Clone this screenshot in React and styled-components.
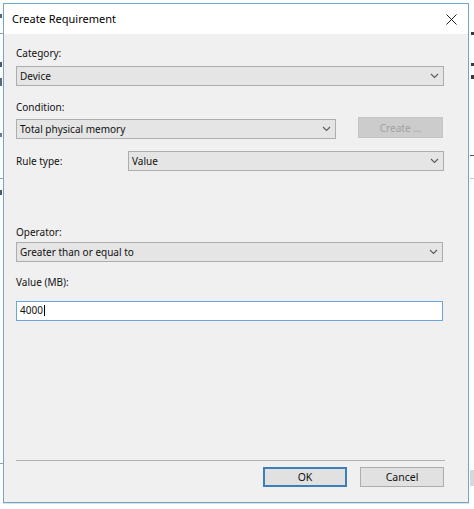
import React from "react";
import styled, { createGlobalStyle } from "styled-components";

const Global = createGlobalStyle`
  html, body { margin: 0; padding: 0; background: #ffffff; }
  body { font-family: "Noto Sans", "Liberation Sans", sans-serif; }
`;

const Desktop = styled.div`
  position: relative;
  width: 474px;
  height: 509px;
  overflow: hidden;
  background: #ffffff;
  padding: 3px 0 0 3px;
  box-sizing: border-box;
`;

const Mark = styled.div`
  position: absolute;
  background: ${(p) => p.$c || "#3a4a5a"};
`;

const Window = styled.div`
  position: relative;
  width: 466px;
  height: 500px;
  box-sizing: border-box;
  border: 1px solid #72a6c6;
  background: #f0f0f0;
  display: flex;
  flex-direction: column;
  box-shadow: 0 1px 0 #d6e3ec;
`;

const TitleBar = styled.div`
  height: 30px;
  background: #ffffff;
  display: flex;
  align-items: center;
  justify-content: space-between;
  padding: 0 10px 0 8px;
  flex-shrink: 0;
`;

const Title = styled.span`
  font-size: 11px;
  color: #000;
  line-height: 14px;
  margin-top: -1px;
`;

const CloseBtn = styled.div`
  width: 14px;
  height: 14px;
  display: flex;
  align-items: center;
  justify-content: center;
`;

const Body = styled.div`
  flex: 1;
  display: flex;
  flex-direction: column;
  padding: 12px 24px 0 12px;
`;

const Label = styled.div`
  font-size: 10px;
  line-height: 14px;
  height: 14px;
  color: #111;
  margin-top: ${(p) => p.$mt || 0}px;
  margin-bottom: ${(p) => p.$mb || 0}px;
  flex-shrink: 0;
`;

const Select = styled.div`
  height: 20px;
  box-sizing: border-box;
  border: 1px solid #adadad;
  background: #e5e5e5;
  display: flex;
  align-items: center;
  justify-content: space-between;
  padding: 0 4px 0 3px;
  font-size: 10px;
  color: #111;
  flex: ${(p) => (p.$grow ? 1 : "none")};
  width: ${(p) => (p.$w ? p.$w + "px" : "auto")};
  margin-top: ${(p) => p.$mt || 0}px;
  margin-right: ${(p) => p.$mr || 0}px;
  flex-shrink: 0;
`;

const Row = styled.div`
  display: flex;
  align-items: ${(p) => p.$align || "center"};
  height: 21px;
  margin-top: ${(p) => p.$mt || 0}px;
  flex-shrink: 0;
`;

const InlineLabel = styled.div`
  width: 112px;
  font-size: 10px;
  color: #111;
  line-height: 14px;
  padding-top: 1px;
`;

const DisabledButton = styled.div`
  width: 85px;
  height: 21px;
  box-sizing: border-box;
  margin-left: 22px;
  background: #cccccc;
  border: 1px solid #c4c4c4;
  color: #a2a2a2;
  font-size: 10px;
  display: flex;
  align-items: center;
  justify-content: center;
`;

const Input = styled.div`
  height: 20px;
  box-sizing: border-box;
  border: 1px solid #6aa6dc;
  background: #ffffff;
  display: flex;
  align-items: center;
  padding: 0 3px 2px 3px;
  font-size: 10px;
  color: #111;
  margin-right: 1px;
  flex-shrink: 0;
`;

const Caret = styled.span`
  display: inline-block;
  width: 1px;
  height: 11px;
  background: #000;
  margin-left: 1px;
`;

const Spacer = styled.div`
  flex: 1;
`;

const Separator = styled.div`
  height: 1px;
  background: #b0b0b0;
  margin-right: -1px;
  flex-shrink: 0;
`;

const Footer = styled.div`
  display: flex;
  justify-content: flex-end;
  gap: 13px;
  padding: 6px 0 15px 0;
`;

const Button = styled.div`
  width: 84px;
  height: 20px;
  box-sizing: border-box;
  background: #e1e1e1;
  border: ${(p) => (p.$default ? "2px solid #3b7fbb" : "1px solid #adadad")};
  font-size: 10.5px;
  color: #111;
  display: flex;
  align-items: center;
  justify-content: center;
`;

const Chevron = () => (
  <svg width="9" height="6" viewBox="0 0 9 6">
    <path d="M1 1 L4.5 4.5 L8 1" fill="none" stroke="#5a5a5a" strokeWidth="1.1" />
  </svg>
);

const CloseIcon = () => (
  <svg width="11" height="11" viewBox="0 0 11 11">
    <path d="M0.5 0.5 L10.5 10.5 M10.5 0.5 L0.5 10.5" stroke="#222" strokeWidth="1" />
  </svg>
);

export default function App() {
  return (
    <>
      <Global />
      <Desktop>
        <Mark style={{ left: 0, top: 14, width: 2, height: 4 }} $c="#4a6a8a" />
        <Mark style={{ left: 0, top: 33, width: 3, height: 1 }} $c="#9aa4ad" />
        <Mark style={{ left: 0, top: 62, width: 2, height: 5 }} $c="#4a5a6a" />
        <Mark style={{ left: 0, top: 78, width: 2, height: 8 }} $c="#5a6a7a" />
        <Mark style={{ left: 0, top: 133, width: 2, height: 4 }} $c="#6a7a8a" />
        <Mark style={{ left: 0, top: 178, width: 3, height: 1 }} $c="#9aa4ad" />
        <Mark style={{ left: 0, top: 190, width: 2, height: 5 }} $c="#4a5a6a" />
        <Mark style={{ left: 0, top: 463, width: 3, height: 1 }} $c="#a0a0a0" />
        <Mark style={{ left: 471, top: 32, width: 3, height: 3 }} $c="#3a3a3a" />
        <Mark style={{ left: 471, top: 63, width: 3, height: 3 }} $c="#3a3a3a" />
        <Mark style={{ left: 471, top: 75, width: 3, height: 4 }} $c="#3a3a3a" />
        <Mark style={{ left: 470, top: 155, width: 4, height: 1 }} $c="#555" />
        <Mark style={{ left: 470, top: 178, width: 4, height: 1 }} $c="#c8c8c8" />
        <Mark style={{ left: 470, top: 470, width: 4, height: 16 }} $c="#d8d8d8" />
        <Window>
          <TitleBar>
            <Title>Create Requirement</Title>
            <CloseBtn>
              <CloseIcon />
            </CloseBtn>
          </TitleBar>
          <Body>
            <Label $mb={6}>Category:</Label>
            <Select>
              <span>Device</span>
              <Chevron />
            </Select>
            <Label $mt={14} $mb={3}>Condition:</Label>
            <Row $align="flex-start">
              <Select $w={320} $mt={2}>
                <span>Total physical memory</span>
                <Chevron />
              </Select>
              <DisabledButton>Create ...</DisabledButton>
            </Row>
            <Row $mt={12}>
              <InlineLabel>Rule type:</InlineLabel>
              <Select $grow>
                <span>Value</span>
                <Chevron />
              </Select>
            </Row>
            <Label $mt={54} $mb={3}>Operator:</Label>
            <Select $mr={1}>
              <span>Greater than or equal to</span>
              <Chevron />
            </Select>
            <Label $mt={13} $mb={12}>Value (MB):</Label>
            <Input>
              <span>4000</span>
              <Caret />
            </Input>
            <Spacer />
            <Separator />
            <Footer>
              <Button $default>OK</Button>
              <Button>Cancel</Button>
            </Footer>
          </Body>
        </Window>
      </Desktop>
    </>
  );
}
